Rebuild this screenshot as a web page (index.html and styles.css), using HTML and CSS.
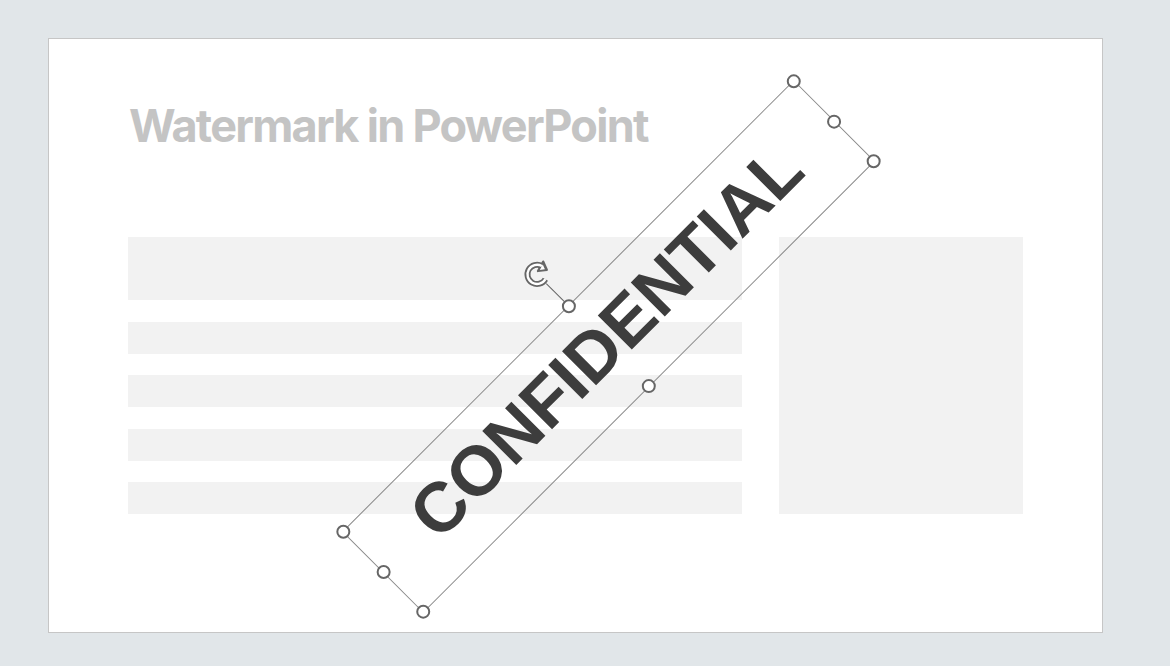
FILE: index.html
```html
<!DOCTYPE html>
<html>
<head>
<meta charset="utf-8">
<title>Watermark in PowerPoint</title>
<link rel="stylesheet" href="styles.css">
</head>
<body>
<div class="slide">
  <h1 class="title">Watermark in PowerPoint</h1>
  <div class="content">
    <div class="col">
      <div class="block block-lg"></div>
      <div class="block bar bar-first"></div>
      <div class="block bar"></div>
      <div class="block bar bar-mid"></div>
      <div class="block bar"></div>
    </div>
    <div class="block side"></div>
  </div>
  <div class="watermark">
    <div class="wm-text">CONFIDENTIAL</div>
    <div class="rot-line"></div>
    <svg class="rot-icon" width="30" height="30" viewBox="0 0 28 28">
      <path d="M21.8 18.5 A9 9 0 1 1 18.5 6.2" fill="none" stroke="#666666" stroke-width="5.5"/>
      <polygon points="23.2,9.8 14.8,10.9 19.7,2.0" fill="#666666" stroke="#666666" stroke-width="2" stroke-linejoin="round"/>
      <path d="M21.8 18.5 A9 9 0 1 1 18.5 6.2" fill="none" stroke="#ffffff" stroke-width="2.2"/>
      <polygon points="21.3,9.3 16.5,9.9 19.3,4.8" fill="#ffffff"/>
    </svg>
    <span class="handle h-tl"></span>
    <span class="handle h-tm"></span>
    <span class="handle h-tr"></span>
    <span class="handle h-ml"></span>
    <span class="handle h-mr"></span>
    <span class="handle h-bl"></span>
    <span class="handle h-bm"></span>
    <span class="handle h-br"></span>
  </div>
</div>
</body>
</html>
```
FILE: styles.css
```css
html, body {
  margin: 0;
}
body {
  background: #e1e6e9;
  padding: 38px 0 0 48px;
  height: 666px;
  box-sizing: border-box;
  overflow: hidden;
}
.slide {
  position: relative;
  width: 1055px;
  height: 595px;
  box-sizing: border-box;
  border: 1px solid #c6c6c6;
  background: #ffffff;
  padding: 64px 0 0 79px;
}
.title {
  margin: 0 0 0 1px;
  font-family: Inter, "Liberation Sans", sans-serif;
  font-weight: 700;
  font-size: 45px;
  line-height: 45px;
  letter-spacing: -1.7px;
  color: #c4c4c4;
}
.content {
  display: grid;
  grid-template-columns: 614px 244px;
  column-gap: 37px;
  margin-top: 89px;
}
.col {
  display: flex;
  flex-direction: column;
  gap: 21px;
}
.block {
  background: #f2f2f2;
}
.block-lg {
  height: 63px;
}
.bar {
  height: 32px;
}
.bar-first,
.bar-mid {
  margin-top: 1px;
}
.side {
  height: 277px;
}
.watermark {
  position: absolute;
  left: 240px;
  top: 250px;
  width: 639px;
  height: 115px;
  box-sizing: border-box;
  border: 1px solid #8a8a8a;
  transform: rotate(-45deg);
}
.wm-text {
  font-family: "Liberation Sans", Arial, sans-serif;
  font-weight: 700;
  font-size: 70px;
  line-height: 70px;
  color: #3d3d3d;
  text-align: center;
  white-space: nowrap;
  padding: 16px 0 0 4px;
}
.handle {
  position: absolute;
  width: 14px;
  height: 14px;
  box-sizing: border-box;
  border: 2px solid #666666;
  border-radius: 50%;
  background: #ffffff;
  transform: translate(-50%, -50%);
}
.h-tl { left: 0; top: 0; }
.h-tm { left: 50%; top: 0; }
.h-tr { left: 100%; top: 0; }
.h-ml { left: 0; top: 50%; }
.h-mr { left: 100%; top: 50%; }
.h-bl { left: 0; top: 100%; }
.h-bm { left: 50%; top: 100%; }
.h-br { left: 100%; top: 100%; }
.rot-line {
  position: absolute;
  left: 50%;
  top: -32px;
  width: 1px;
  height: 26px;
  background: #666666;
  transform: translateX(-50%);
}
.rot-icon {
  position: absolute;
  left: 50%;
  top: -45px;
  transform: translate(-50%, -50%) rotate(45deg);
}
```
